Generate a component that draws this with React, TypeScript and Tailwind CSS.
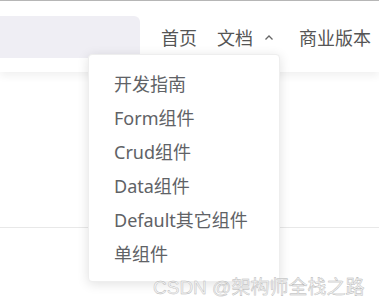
import React from "react";

const items = ["开发指南", "Form组件", "Crud组件", "Data组件", "Default其它组件", "单组件"];

export default function App() {
  return (
    <div
      className="relative w-[379px] h-[306px] bg-white overflow-hidden"
      style={{ fontFamily: '"Noto Sans", "Noto Sans CJK SC", sans-serif' }}
    >
      <div className="h-[1px] bg-[#b8b8b8]" />
      <div className="h-[71px] flex items-start shadow-[0_4px_8px_rgba(0,0,0,0.06)]">
        <div className="w-[140px] h-[42px] mt-[15px] bg-[#efeef4] rounded-tr-[6px]" />
        <div className="flex items-center h-[42px] mt-[16px] text-[18px] text-[#555]">
          <span className="ml-[21px]">首页</span>
          <span className="ml-[20px]">文档</span>
          <svg className="ml-[11px]" width="10" height="10" viewBox="0 0 10 10">
            <path d="M1.5 6.5 L5 3 L8.5 6.5" fill="none" stroke="#666" strokeWidth="1.3" />
          </svg>
          <span className="ml-[25px]">商业版本</span>
        </div>
      </div>
      <div className="h-[155px]" />
      <div className="h-[1px] bg-[#e8e8e8]" />

      <div className="absolute left-[88px] top-[54px] w-[192px] h-[228px] bg-white rounded-[4px] shadow-[0_2px_12px_rgba(0,0,0,0.12)] border border-[#eeeeee] pt-[12px]">
        {items.map((t) => (
          <div key={t} className="h-[34px] leading-[34px] pl-[25px] text-[18px] text-[#606266]">
            {t}
          </div>
        ))}
      </div>

      <div
        className="absolute left-[153px] top-[274px] text-[19px] leading-[28px] text-[#f4f4f4] [-webkit-text-stroke:0.4px_#b4b4b4]"
        style={{ fontFamily: '"Liberation Sans", "Noto Sans CJK SC", sans-serif' }}
      >
        CSDN @架构师全栈之路
      </div>
    </div>
  );
}
